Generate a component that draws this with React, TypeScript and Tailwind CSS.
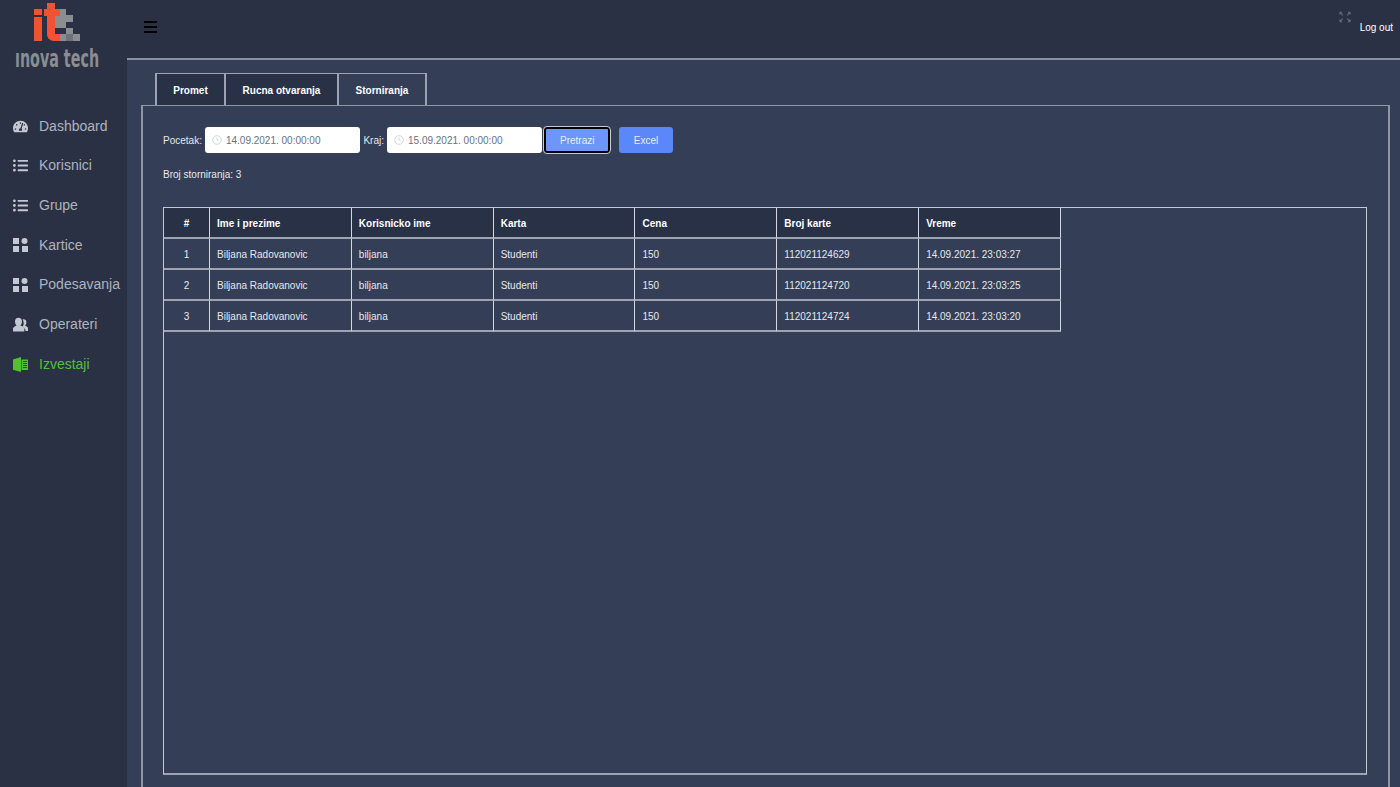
import React from "react";
import { FaTachometerAlt, FaListUl } from "react-icons/fa";

const GridIcon = () => (
  <svg width="15" height="14" viewBox="0 0 15 14" fill="currentColor">
    <rect x="0" y="0" width="6" height="6" />
    <circle cx="11.5" cy="3" r="3" />
    <rect x="0" y="8" width="6" height="6" />
    <rect x="9" y="8" width="6" height="6" />
  </svg>
);

const UsersIcon = () => (
  <svg width="15" height="15" viewBox="0 0 15 15" fill="currentColor">
    <path d="M11 2.2c1.6.3 2.500 1.500 2.400 3.200-.1 1.300-.6 2.400-1.400 3 1.200.6 2.600 1.300 3 2.400V14h-2.400c0-1.800-1.200-3-3.200-4 .9-1.200 1.500-3 1.200-4.600-.1-1.200-.5-2.400-1.100-3 .6-.3 1.200-.3 1.500-.2z" />
    <path d="M5.500 0.700C7.700.7 9 2.300 9 4.600c0 1.700-.6 3.200-1.600 4 1.700.8 3.600 1.700 3.900 3V14.500H0v-2.900c.3-1.300 2.100-2.200 3.700-3C2.700 7.800 2 6.300 2 4.600 2 2.300 3.300.7 5.500.7z" />
  </svg>
);

const BookIcon = () => (
  <svg width="15" height="15" viewBox="0 0 15 15">
    <path d="M0 2.500 8 0v15l-8-2.200z" fill="#4fc133" />
    <path d="M8.500 2.500H15v10.500H8.500z" fill="#4fc133" />
    <path d="M10 4.500h4M10 6.500h4M10 8.500h4M10 10.500h4" stroke="#2a3144" strokeWidth="0.8" />
  </svg>
);

const ClockIcon = () => (
  <svg width="10" height="10" viewBox="0 0 10 10" fill="none" stroke="#c9ccd6" strokeWidth="0.8" className="shrink-0">
    <circle cx="5" cy="5" r="4.300" />
    <path d="M5 2.500V5l1.600 1" />
  </svg>
);

const ExpandIcon = () => (
  <svg width="12" height="12" viewBox="0 0 14 13" fill="none" stroke="#646b7a" strokeWidth="1.300" className="block">
    <path d="M1 1l3.500 3.500M1 1h2.600M1 1v2.600" />
    <path d="M13 1L9.500 4.500M13 1h-2.600M13 1v2.600" />
    <path d="M1 12l3.500-3.500M1 12h2.600M1 12V9.400" />
    <path d="M13 12L9.500 8.500M13 12h-2.600M13 12V9.400" />
  </svg>
);

const Logo = () => (
  <div className="h-[102px]">
    <svg width="127" height="47" viewBox="0 0 127 47" className="block">
      <path fill="#8b8d91" d="M55 9h11v6h7v7h-7v6H55z" />
      <path fill="#8b8d91" d="M66 28h7v6h-7zM59 34h7v7h-7zM73 34h7v7h-7z" />
      <path fill="#6f7279" d="M66 34h7v7h-7z" />
      <path fill="#ef5331" d="M34 9h8v6h-8zM34 17h8v24h-8zM47 3h8v6h5v7h-5v18h5v7h-6c-4 0-7-3-7-7V16h-3V9h3z" />
    </svg>
    <div className="pl-[15px] w-[127px] overflow-visible">
      <span className="block w-fit origin-left scale-x-[0.596] whitespace-nowrap font-['DejaVu_Sans',sans-serif] font-bold text-[24px] leading-[24px] text-[#8b8d91]">ınova tech</span>
    </div>
  </div>
);

const nav = [
  { label: "Dashboard", icon: <FaTachometerAlt size={15} /> },
  { label: "Korisnici", icon: <FaListUl size={15} /> },
  { label: "Grupe", icon: <FaListUl size={15} /> },
  { label: "Kartice", icon: <GridIcon /> },
  { label: "Podesavanja", icon: <GridIcon /> },
  { label: "Operateri", icon: <UsersIcon /> },
  { label: "Izvestaji", icon: <BookIcon />, active: true },
];

const heads = ["#", "Ime i prezime", "Korisnicko ime", "Karta", "Cena", "Broj karte", "Vreme"];
const rows = [
  ["1", "Biljana Radovanovic", "biljana", "Studenti", "150", "112021124629", "14.09.2021. 23:03:27"],
  ["2", "Biljana Radovanovic", "biljana", "Studenti", "150", "112021124720", "14.09.2021. 23:03:25"],
  ["3", "Biljana Radovanovic", "biljana", "Studenti", "150", "112021124724", "14.09.2021. 23:03:20"],
];

const DateInput = ({ value }: { value: string }) => (
  <div className="w-[155.500px] h-[26px] bg-white rounded-[3px] flex items-center gap-[4px] pl-[7px] text-[10px] text-[#6b7080]">
    <ClockIcon />
    <span>{value}</span>
  </div>
);

export default function App() {
  return (
    <div className="w-[1400px] h-[787px] overflow-hidden flex bg-[#343e56] font-['Liberation_Sans',Arial,sans-serif]">
      <aside className="w-[127px] shrink-0 bg-[#2a3144]">
        <Logo />
        <nav className="flex flex-col mt-[4.300px] pl-[13px]">
          {nav.map((n) => (
            <div
              key={n.label}
              className={`h-[39.700px] flex items-center gap-[11px] text-[14px] whitespace-nowrap ${n.active ? "text-[#4fc133]" : "text-[#aeb3bf]"}`}
            >
              <span className={`w-[15px] flex justify-center shrink-0 ${n.active ? "" : "text-[#c4c8d2]"}`}>{n.icon}</span>
              <span>{n.label}</span>
            </div>
          ))}
        </nav>
      </aside>

      <main className="flex-1 min-w-0 flex flex-col">
        <header className="h-[60px] shrink-0 bg-[#2a3144] border-b-2 border-[#8a90a0] flex items-start justify-between pl-[17px] pr-[7px]">
          <div className="mt-[21px] w-[13px] flex flex-col gap-[3px]">
            <span className="h-[2px] bg-black block" />
            <span className="h-[2px] bg-black block" />
            <span className="h-[2px] bg-black block" />
          </div>
          <div className="flex items-start">
            <span className="mt-[11px] mr-[9px]"><ExpandIcon /></span>
            <span className="mt-[21px] text-[10px] leading-[14px] text-white">Log out</span>
          </div>
        </header>

        <div className="flex-1 min-h-0 pl-[14px] pr-[10px] pt-[13px] flex flex-col">
          <div className="flex ml-[14px] h-[33px] shrink-0 -mb-[1px] text-[10px] font-bold text-white">
            <div className="w-[71px] bg-[#293147] border-t border-x-2 border-[#9ca2b1] flex items-center justify-center">Promet</div>
            <div className="w-[115px] -ml-[2px] bg-[#293147] border-t border-x-2 border-[#9ca2b1] flex items-center justify-center">Rucna otvaranja</div>
            <div className="w-[90px] -ml-[2px] bg-[#343e56] border-t border-x-2 border-[#9ca2b1] flex items-center justify-center">Storniranja</div>
          </div>
          <section className="flex-1 min-h-0 border-t border-l-2 border-r-2 border-[#8f95a5] pl-[20px] pr-[21px] pt-[21px]">
            <div className="flex items-center h-[26px] text-[10px] text-[#e6e8ee]">
              <span className="mr-[3px]">Pocetak:</span>
              <DateInput value="14.09.2021. 00:00:00" />
              <span className="ml-[3px] mr-[3px]">Kraj:</span>
              <DateInput value="15.09.2021. 00:00:00" />
              <button className="ml-[2px] w-[65.500px] h-[26px] bg-[#6d96fb] text-[#e8edfb] text-[10px] rounded-[3px] border-2 border-black outline outline-1 outline-[#c8ccd6]">Pretrazi</button>
              <button className="ml-[9px] w-[54px] h-[26px] bg-[#5b87f9] text-[#e8edfb] text-[10px] rounded-[3px]">Excel</button>
            </div>
            <p className="mt-[15px] text-[10px] leading-[14px] text-[#e6e8ee]">Broj storniranja: 3</p>
            <div className="mt-[25px] h-[568px] border border-[#c4c8d2] border-b-2 border-b-[#9ea3b2]">
              <table className="w-[896.800px] table-fixed border-separate border-spacing-0 text-[10px] text-[#e6e8ee]">
                <colgroup>
                  <col className="w-[46px]" />
                  <col className="w-[141.800px]" />
                  <col className="w-[141.800px]" />
                  <col className="w-[141.800px]" />
                  <col className="w-[141.800px]" />
                  <col className="w-[141.800px]" />
                  <col className="w-[141.600px]" />
                </colgroup>
                <thead>
                  <tr className="h-[31px] bg-[#293147] text-white">
                    {heads.map((h, i) => (
                      <th key={h} className={`pt-[2px] border-b-2 border-b-[#9ea3b2] border-r border-r-[#d5d8e0] font-bold ${i === 0 ? "text-center" : "text-left pl-[7px]"}`}>{h}</th>
                    ))}
                  </tr>
                </thead>
                <tbody>
                  {rows.map((r) => (
                    <tr key={r[0]} className="h-[31px]">
                      {r.map((c, i) => (
                        <td key={i} className={`pt-[2px] border-b-2 border-b-[#9ea3b2] border-r border-r-[#d5d8e0] ${i === 0 ? "text-center" : "pl-[7px]"}`}>{c}</td>
                      ))}
                    </tr>
                  ))}
                </tbody>
              </table>
            </div>
          </section>
        </div>
      </main>
    </div>
  );
}
